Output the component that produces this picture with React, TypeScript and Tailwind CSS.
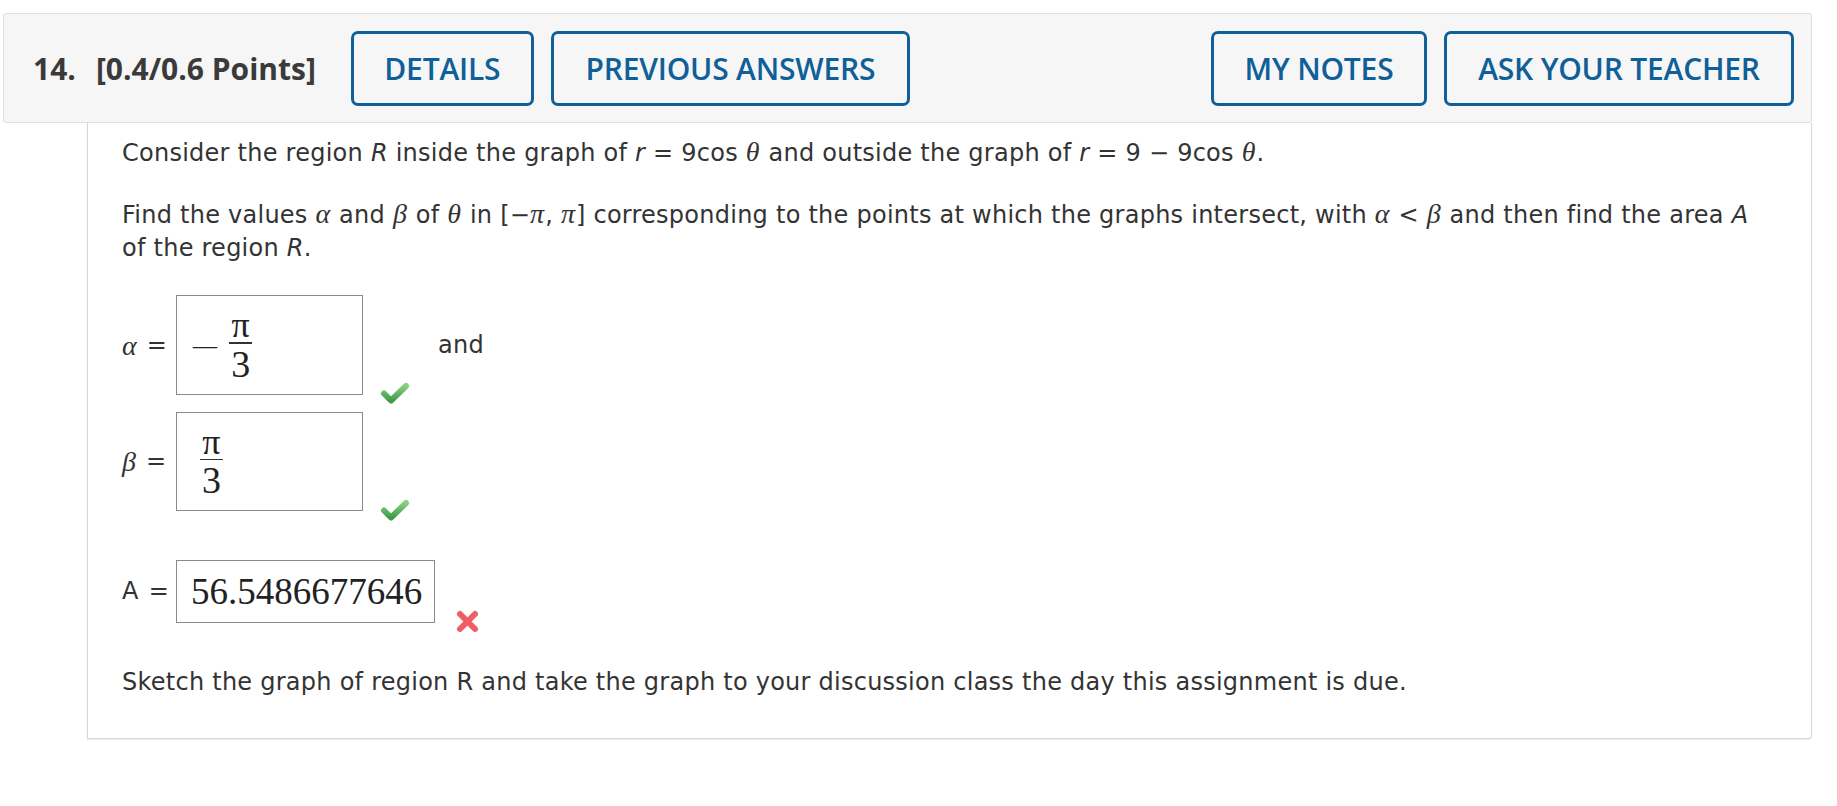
import React from "react";

const Greek = ({ children }: { children: React.ReactNode }) => (
  <i className="font-['Liberation_Serif',serif] text-[28px] italic tracking-[1px]">{children}</i>
);
const Var = ({ children }: { children: React.ReactNode }) => (
  <i className="italic">{children}</i>
);

const Check = () => (
  <svg width="30" height="24" viewBox="0 0 30 24" className="block">
    <defs>
      <linearGradient id="cg" x1="0" y1="0" x2="0" y2="1">
        <stop offset="0" stopColor="#86d080" />
        <stop offset="1" stopColor="#3f9c46" />
      </linearGradient>
    </defs>
    <path d="M4 12.5 L11 19.5 L26 5" stroke="url(#cg)" strokeWidth="6" fill="none" strokeLinecap="round" strokeLinejoin="round" />
  </svg>
);

const Cross = () => (
  <svg width="25" height="25" viewBox="0 0 25 25" className="block">
    <path d="M5 5 L20 20 M20 5 L5 20" stroke="#ee4b54" strokeWidth="6" fill="none" strokeLinecap="round" opacity="0.9" />
  </svg>
);

const Fraction = () => (
  <div className="flex flex-col items-center font-['Liberation_Serif',serif] text-[#222]">
    <span className="text-[36px] leading-[34px]">π</span>
    <span className="block w-[23px] h-[1.5px] bg-[#333]" />
    <span className="mt-[2px] text-[38px] leading-[36px]">3</span>
  </div>
);

const Btn = ({ w, children }: { w: string; children: React.ReactNode }) => (
  <div
    className={`${w} h-[75px] border-[3px] border-[#0f5f98] rounded-[7px] flex items-center justify-center text-[30px] font-semibold text-[#0f5f98] font-['Open_Sans',sans-serif] tracking-[-0.2px]`}
  >
    {children}
  </div>
);

export default function App() {
  return (
    <div className="w-[1837px] h-[806px] bg-white pt-[13px] overflow-hidden">
      <div className="ml-[3px] w-[1809px]">
        <div className="flex items-center h-[110px] border border-[#dedede] bg-[#f6f6f6] rounded-[3px] pl-[29px] pr-[17px]">
          <span className="font-['Open_Sans',sans-serif] font-bold text-[30px] text-[#3a3a3a]">14.</span>
          <span className="ml-[20px] font-['Open_Sans',sans-serif] font-bold text-[30px] text-[#3a3a3a]">[0.4/0.6 Points]</span>
          <div className="ml-[35px] flex gap-[17px]">
            <Btn w="w-[183px]">DETAILS</Btn>
            <Btn w="w-[359px]">PREVIOUS ANSWERS</Btn>
          </div>
          <div className="flex-1" />
          <div className="flex gap-[17px]">
            <Btn w="w-[216px]">MY NOTES</Btn>
            <Btn w="w-[350px]">ASK YOUR TEACHER</Btn>
          </div>
        </div>

        <div className="ml-[84px] border-x border-b border-[#d6d6d6] rounded-br-[4px] shadow-[0_1px_1px_rgba(0,0,0,0.08)] pl-[34px] pt-[12px] pb-[39px] text-[24px] leading-[33px] tracking-[0.25px] text-[#333] font-['DejaVu_Sans',Verdana,sans-serif]">
          <p className="whitespace-nowrap">
            Consider the region <Var>R</Var> inside the graph of <Var>r</Var> = 9cos <Greek>θ</Greek> and outside the graph of{" "}
            <Var>r</Var> = 9 − 9cos <Greek>θ</Greek>.
          </p>
          <p className="mt-[27px] whitespace-nowrap">
            Find the values <Greek>α</Greek> and <Greek>β</Greek> of <Greek>θ</Greek> in [−<Greek>π</Greek>, <Greek>π</Greek>] corresponding to the
            points at which the graphs intersect, with <Greek>α</Greek> &lt; <Greek>β</Greek> and then find the area <Var>A</Var>
            <br />
            of the region <Var>R</Var>.
          </p>

          <div className="mt-[30px] flex h-[100px]">
            <div className="w-[54px] flex items-center">
              <Greek>α</Greek>
              <span className="ml-[9px]">=</span>
            </div>
            <div className="w-[187px] h-[100px] border border-[#8a8a8a] flex items-center pl-[16px]">
              <span className="font-['Liberation_Serif',serif] text-[24px] text-[#222] leading-none mr-[12px]">—</span>
              <Fraction />
            </div>
            <div className="ml-[17px] self-end -mb-[10px]">
              <Check />
            </div>
            <div className="ml-[28px] self-center">and</div>
          </div>

          <div className="mt-[17px] flex h-[99px]">
            <div className="w-[54px] flex items-center">
              <Greek>β</Greek>
              <span className="ml-[9px]">=</span>
            </div>
            <div className="w-[187px] h-[99px] border border-[#8a8a8a] flex items-center pl-[23px]">
              <Fraction />
            </div>
            <div className="ml-[17px] self-end -mb-[11px]">
              <Check />
            </div>
          </div>

          <div className="mt-[49px] flex h-[63px]">
            <div className="w-[54px] flex items-center">
              <span>A</span>
              <span className="ml-[10px]">=</span>
            </div>
            <div className="w-[259px] h-[63px] border border-[#8a8a8a] flex items-center pl-[14px] font-['Liberation_Serif',serif] text-[37px] tracking-normal text-[#222]">
              56.5486677646
            </div>
            <div className="ml-[20px] self-end -mb-[11px]">
              <Cross />
            </div>
          </div>

          <p className="mt-[43px]">
            Sketch the graph of region R and take the graph to your discussion class the day this assignment is due.
          </p>
        </div>
      </div>
    </div>
  );
}
